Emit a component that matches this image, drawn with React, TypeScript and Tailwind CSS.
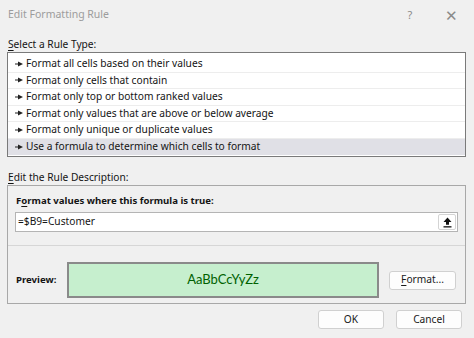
import React from 'react';

const rules = [
  'Format all cells based on their values',
  'Format only cells that contain',
  'Format only top or bottom ranked values',
  'Format only values that are above or below average',
  'Format only unique or duplicate values',
  'Use a formula to determine which cells to format',
];

function RuleArrow() {
  return (
    <svg width="8" height="6" viewBox="0 0 8 6" className="shrink-0">
      <rect x="0" y="2.5" width="3.5" height="1" fill="#222" />
      <path d="M3 0.5 L8 3 L3 5.5 Z" fill="#222" />
    </svg>
  );
}

function UploadIcon() {
  return (
    <svg width="9" height="11" viewBox="0 0 9 11">
      <path d="M4.5 0.5 L8.5 5 L6 5 L6 7.8 L3 7.8 L3 5 L0.5 5 Z" fill="#111" />
      <rect x="0.5" y="9.2" width="8" height="1.3" fill="#111" />
    </svg>
  );
}

function DialogButton({ children, className = '' }: { children: React.ReactNode; className?: string }) {
  return (
    <button
      type="button"
      className={`flex items-center justify-center rounded-[3px] border border-[#d0d0d0] bg-[#fdfdfd] text-[10.2px] text-[#1a1a1a] ${className}`}
    >
      {children}
    </button>
  );
}

export default function App() {
  return (
    <div
      className="relative flex h-[338px] w-[474px] flex-col overflow-hidden bg-[#f0f0f0] text-[10.2px] text-[#141414]"
      style={{ fontFamily: '"Noto Sans", "Open Sans", sans-serif' }}
    >
      {/* title bar */}
      <div className="flex h-[30px] shrink-0 items-center pl-[8px]">
        <span className="flex-1 text-[10.5px] text-[#9c9c9c]">Edit Formatting Rule</span>
        <span className="w-[20px] text-center text-[11px] text-[#8a8a8a]">?</span>
        <span className="ml-[21px] mr-[13px] w-[20px] text-center text-[15px] font-light text-[#8a8a8a]">✕</span>
      </div>

      <div className="flex flex-col px-[7px]">
        <div className="h-[22px] pl-[1px] pt-[7px] leading-[14px]">
          <span className="underline underline-offset-2">S</span>elect a Rule Type:
        </div>

        <ul className="flex w-[459px] flex-col border border-[#7a7a7a] bg-white pb-[1px] pt-[3px]">
          {rules.map((rule, i) => (
            <li
              key={rule}
              className={`flex h-[16.5px] items-center gap-[3px] pl-[7px] ${
                i === rules.length - 1 ? 'bg-[#e0e0e6]' : 'border-b border-[#ededed]'
              }`}
            >
              <RuleArrow />
              <span>{rule}</span>
            </li>
          ))}
        </ul>

        <div className="mt-[12px] h-[16px] pl-[1px] leading-[16px]">
          <span className="underline underline-offset-2">E</span>dit the Rule Description:
        </div>

        <div className="flex h-[119px] w-[459px] flex-col border border-[#a8a8a8]">
          <div className="mt-[7px] h-[16px] pl-[8px] text-[9.6px] font-bold leading-[16px]">
            F<span className="underline underline-offset-2">o</span>rmat values where this formula is true:
          </div>
          <div className="mx-[7px] mt-[3px] flex h-[20px] items-center border border-[#b4b4b4] bg-white">
            <span className="flex-1 pl-[2px]">=$B9=Customer</span>
            <div className="mr-[1px] flex h-[16px] w-[18px] items-center justify-center rounded-[2px] border border-[#d4d4d4] bg-white">
              <UploadIcon />
            </div>
          </div>
          <div className="mt-[13px] h-0 border-t border-[#d6d6d6]" />
          <div className="mt-[16px] flex items-center pl-[8px]">
            <span className="w-[51px] text-[9.6px] font-bold">Preview:</span>
            <div
              className="flex h-[36px] w-[312px] items-center justify-center border-2 border-[#8a8a8a] bg-[#c6efce] text-[13px] text-[#006100]"
              style={{ fontFamily: 'Lato, "Open Sans", sans-serif' }}
            >
              AaBbCcYyZz
            </div>
            <DialogButton className="ml-[10px] h-[19px] w-[67px]">
              <span className="underline underline-offset-2">F</span>ormat...
            </DialogButton>
          </div>
        </div>

        <div className="mt-[6px] flex justify-end gap-[12px] pr-[5px]">
          <DialogButton className="h-[19px] w-[66px]">OK</DialogButton>
          <DialogButton className="h-[19px] w-[66px]">Cancel</DialogButton>
        </div>
      </div>
    </div>
  );
}
